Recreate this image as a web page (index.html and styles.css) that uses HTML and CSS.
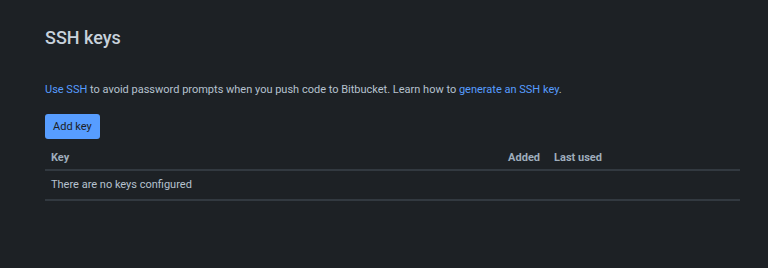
FILE: index.html
```html
<!DOCTYPE html>
<html lang="en">
<head>
    <meta charset="UTF-8">
    <title>SSH keys</title>
    <link rel="stylesheet" href="styles.css">
</head>
<body>
    <div class="page">
        <h1 class="page-title">SSH keys</h1>
        <p class="intro">
            <a href="#">Use SSH</a> to avoid password prompts when you push code to Bitbucket. Learn how to <a href="#">generate an SSH key</a>.
        </p>
        <button class="add-key" type="button">Add key</button>
        <table class="keys">
            <thead>
                <tr>
                    <th class="col-key">Key</th>
                    <th class="col-added">Added</th>
                    <th class="col-used">Last used</th>
                    <th class="col-actions"></th>
                </tr>
            </thead>
            <tbody>
                <tr>
                    <td colspan="4">There are no keys configured</td>
                </tr>
            </tbody>
        </table>
    </div>
</body>
</html>
```

FILE: styles.css
```css
body {
    margin: 0;
    background: #1d2125;
    color: #b6c2cf;
    font-family: Roboto, "Noto Sans", sans-serif;
    font-size: 11px;
}

.page {
    padding: 0 28px 0 45px;
}

.page-title {
    margin: 0;
    padding-top: 26px;
    font-size: 18px;
    font-weight: 500;
    line-height: 24px;
    color: #c7d1db;
}

.intro {
    margin: 31px 0 0;
    line-height: 18px;
}

.intro a {
    color: #579dff;
    text-decoration: none;
}

.add-key {
    display: block;
    margin-top: 15px;
    height: 25px;
    padding: 0 8px;
    border: none;
    border-radius: 3px;
    background: #579dff;
    color: #1d2125;
    font-family: inherit;
    font-size: 11px;
    cursor: pointer;
}

.keys {
    width: 100%;
    border-collapse: collapse;
}

.keys th {
    padding: 12px 6px 4px;
    line-height: 14px;
    text-align: left;
    white-space: nowrap;
    font-weight: 700;
    color: #9fadbc;
    border-bottom: 2px solid #323940;
}

.keys td {
    padding: 7px 6px 7px;
    line-height: 14px;
    border-bottom: 2px solid #323940;
}

.col-added {
    width: 34px;
}

.col-used {
    width: 47px;
}

.col-actions {
    width: 120px;
}
```
